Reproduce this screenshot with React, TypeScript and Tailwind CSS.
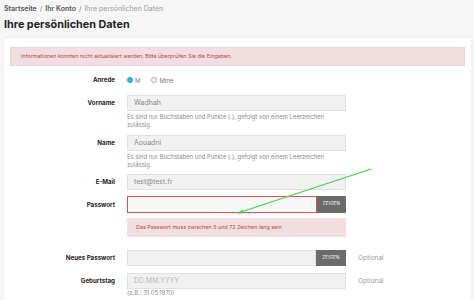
const font = { fontFamily: "Inter, 'Noto Sans', sans-serif" };

function Label({ children }: { children: React.ReactNode }) {
  return <div className="text-right text-[6.2px] font-bold text-[#232323] leading-[16px]">{children}</div>;
}

function Field({ value, placeholder, invalid }: { value?: string; placeholder?: string; invalid?: boolean }) {
  return (
    <div
      className={
        "h-[16px] flex items-center px-[6px] text-[7px] bg-[#f1f1f1] border " +
        (invalid ? "border-[#e05050] bg-[#f6f6f6]" : "border-[#e0e0e0]")
      }
    >
      {value ? (
        <span className="text-[#8a8a8a]">{value}</span>
      ) : (
        <span className="text-[#b8b8b8]">{placeholder}</span>
      )}
    </div>
  );
}

function Help({ children }: { children: React.ReactNode }) {
  return <div className="mt-[2px] text-[5.95px] leading-[8px] text-[#8a8a8a]">{children}</div>;
}

export default function App() {
  return (
    <div className="relative w-[474px] h-[300px] overflow-hidden bg-[#f6f6f6]" style={font}>
      <div className="px-[4px]">
        <div className="text-[7px] leading-[18px] text-[#7a7a7a]">
          <span className="font-semibold text-[#555]">Startseite</span>
          <span className="mx-[3px]">/</span>
          <span className="font-semibold text-[#555]">Ihr Konto</span>
          <span className="mx-[3px]">/</span>
          <span className="text-[#9a9a9a]">Ihre persönlichen Daten</span>
        </div>
        <h1 className="text-[10.8px] font-bold leading-[14px] text-[#232323]">Ihre persönlichen Daten</h1>

        <div className="mt-[6px] w-[467px] bg-white pt-[9px] pb-[20px] shadow-[0_0_3px_rgba(0,0,0,0.06)]">
          <div className="mx-[6px] h-[19px] flex items-center pl-[10px] bg-[#f2dede] text-[5.4px] text-[#b04a4a] border border-[#ecd2d2]">
            Informationen konnten nicht aktualisiert werden. Bitte überprüfen Sie die Eingaben.
          </div>

          <div className="grid grid-cols-[111px_219px_auto] gap-x-[12px] mt-[8px]">
            <div className="text-right text-[6.2px] font-bold text-[#232323] leading-[12px]">Anrede</div>
            <div className="flex items-center gap-[2px] h-[12px] text-[6px] text-[#7a7a7a]">
              <span className="w-[6px] h-[6px] rounded-full bg-[#2fb5d2] border border-[#2fa5c0]" />
              <span className="mr-[9px]">M</span>
              <span className="w-[6px] h-[6px] rounded-full bg-white border border-[#aaa]" />
              <span>Mme</span>
            </div>
            <div />

            <div className="mt-[9px]"><Label>Vorname</Label></div>
            <div className="mt-[9px]">
              <Field value="Wadhah" />
              <Help>Es sind nur Buchstaben und Punkte (.), gefolgt von einem Leerzeichen<br />zulässig.</Help>
            </div>
            <div />

            <div className="mt-[6px]"><Label>Name</Label></div>
            <div className="mt-[6px]">
              <Field value="Aouadni" />
              <Help>Es sind nur Buchstaben und Punkte (.), gefolgt von einem Leerzeichen<br />zulässig.</Help>
            </div>
            <div />

            <div className="mt-[5px]"><Label>E-Mail</Label></div>
            <div className="mt-[5px]"><Field value="test@test.fr" /></div>
            <div />

            <div className="mt-[6px]">
              <div className="text-right text-[6.2px] font-bold text-[#232323] leading-[17px]">Passwort</div>
            </div>
            <div className="mt-[6px]">
              <div className="flex h-[17px]">
                <div className="flex-1 border border-[#e05050] bg-[#f7f7f7]" />
                <div className="w-[29px] flex items-center justify-center bg-[#6b6b6b] text-white text-[4.5px] tracking-[0.2px]">ZEIGEN</div>
              </div>
              <div className="mt-[5px] h-[19px] flex items-center pl-[9px] bg-[#f2dede] text-[5.4px] text-[#b04a4a]">
                Das Passwort muss zwischen 5 und 72 Zeichen lang sein
              </div>
            </div>
            <div />

            <div className="mt-[13px]"><Label>Neues Passwort</Label></div>
            <div className="mt-[13px] flex h-[16px]">
              <div className="flex-1 border border-[#e0e0e0] bg-[#f1f1f1]" />
              <div className="w-[30px] flex items-center justify-center bg-[#6b6b6b] text-white text-[4.5px] tracking-[0.2px]">ZEIGEN</div>
            </div>
            <div className="mt-[13px] text-[6.5px] leading-[16px] text-[#9a9a9a]">Optional</div>

            <div className="mt-[7px]"><Label>Geburtstag</Label></div>
            <div className="mt-[7px]">
              <Field placeholder="DD.MM.YYYY" />
              <div className="text-[5.95px] leading-[8px] text-[#8a8a8a]">(z.B.: 31.05.1970)</div>
            </div>
            <div className="mt-[7px] text-[6.5px] leading-[16px] text-[#9a9a9a]">Optional</div>
          </div>
        </div>
      </div>

      <svg className="absolute left-0 top-0 pointer-events-none" width="474" height="300">
        <line x1="371" y1="169" x2="238" y2="213" stroke="#42d442" strokeWidth="1.2" />
        <path d="M237 213.5 L243 209.5 L242.5 213.5 Z" fill="#42d442" />
      </svg>
    </div>
  );
}
